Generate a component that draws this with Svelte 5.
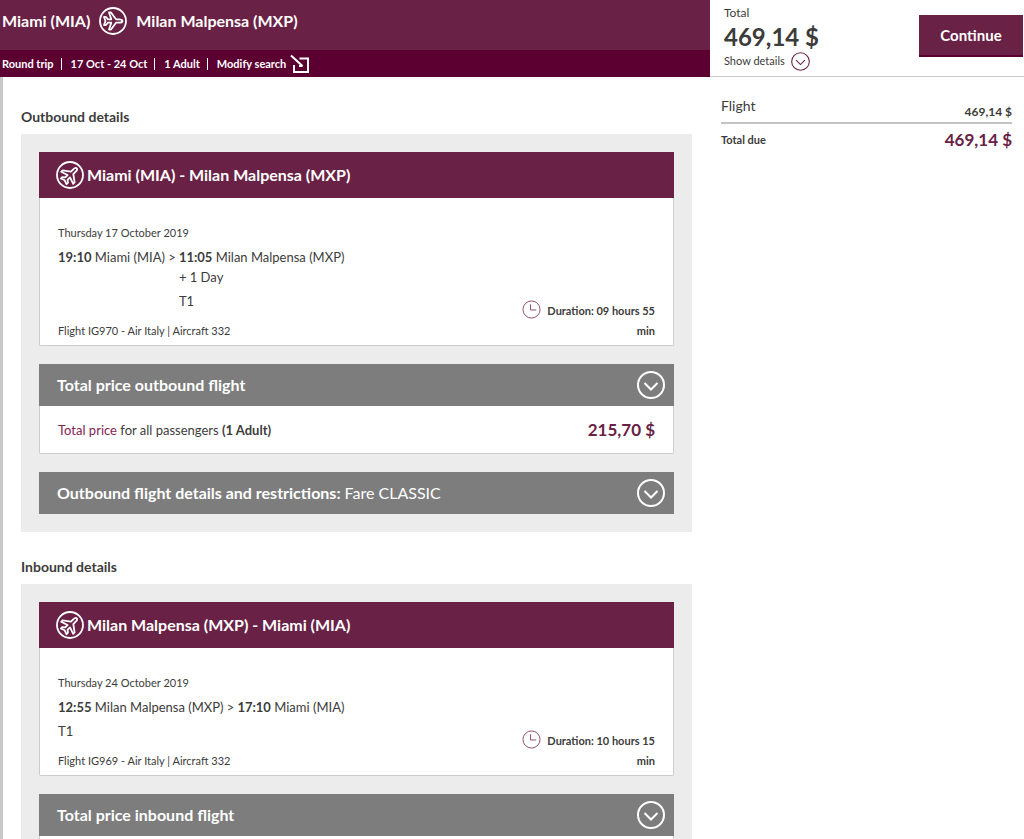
<script>
  const flights = [
    {
      id: 'outbound',
      heading: 'Outbound details',
      title: 'Miami (MIA) - Milan Malpensa (MXP)',
      date: 'Thursday 17 October 2019',
      from: { time: '19:10', place: 'Miami (MIA)', notes: [], terminal: '' },
      to: { time: '11:05', place: 'Milan Malpensa (MXP)', notes: ['+ 1 Day'], terminal: 'T1' },
      carrier: 'Flight IG970 - Air Italy | Aircraft 332',
      duration: '09 hours 55 min',
      priceTitle: 'Total price outbound flight',
      price: '215,70 $',
      restrictions: 'Outbound flight details and restrictions:'
    },
    {
      id: 'inbound',
      heading: 'Inbound details',
      title: 'Milan Malpensa (MXP) - Miami (MIA)',
      date: 'Thursday 24 October 2019',
      from: { time: '12:55', place: 'Milan Malpensa (MXP)', notes: [], terminal: 'T1' },
      to: { time: '17:10', place: 'Miami (MIA)', notes: [], terminal: '' },
      carrier: 'Flight IG969 - Air Italy | Aircraft 332',
      duration: '10 hours 15 min',
      priceTitle: 'Total price inbound flight',
      price: '',
      restrictions: ''
    }
  ];
</script>

{#snippet plane(angle)}
  <svg class="plane" viewBox="0 0 28 28" aria-hidden="true">
    <circle cx="14" cy="14" r="13" />
    <path
      transform="rotate({angle} 14 14)"
      d="M23.5 14C23.5 13 22 12.300 20 12.300H17L12 5.500H10L12.300 12.300H9L7 10H5L6.500 14L5 18H7L9 15.700H12.300L10 22.500H12L17 15.700H20C22 15.700 23.500 15 23.500 14Z"
    />
  </svg>
{/snippet}

{#snippet chevron()}
  <svg class="chevron" viewBox="0 0 28 28" aria-hidden="true">
    <circle cx="14" cy="14" r="13" />
    <path d="M7.500 12L14 18.500L20.500 12" />
  </svg>
{/snippet}

{#snippet stop(s, arrow)}
  <div class="stop">
    <div><b>{s.time}</b> {s.place}{#if arrow}{' >'}{/if}</div>
    {#each s.notes as note}<div>{note}</div>{/each}
    {#if s.terminal}<div class="terminal">{s.terminal}</div>{/if}
  </div>
{/snippet}

<div class="page">
  <header>
    <div class="banner">
      <h1>Miami (MIA) {@render plane(0)} Milan Malpensa (MXP)</h1>
      <div class="trip">
        <span>Round trip</span>
        <span>17 Oct - 24 Oct</span>
        <span>1 Adult</span>
        <a href="#search">
          Modify search
          <svg viewBox="0 0 20 20" aria-hidden="true">
            <path d="M9.500 4.500H18V18H4V11M1 1.500L12.500 12M12.500 12H9" />
          </svg>
        </a>
      </div>
    </div>
    <div class="total">
      <div class="sum">
        <span>Total</span>
        <strong>469,14 $</strong>
        <button class="show">Show details {@render chevron()}</button>
      </div>
      <button class="continue">Continue</button>
    </div>
  </header>

  <div class="content">
    <main>
      {#each flights as f (f.id)}
        <section>
          <h2>{f.heading}</h2>
          <div class="panel">
            <article>
              <h3 class="route">{@render plane(-45)}{f.title}</h3>
              <div class="box flight">
                <div class="info">
                  <div class="small">{f.date}</div>
                  <div class="stops">
                    {@render stop(f.from, true)}
                    {@render stop(f.to, false)}
                  </div>
                  <div class="small carrier">{f.carrier}</div>
                </div>
                <div class="duration">
                  <svg viewBox="0 0 20 20" aria-hidden="true">
                    <circle cx="10" cy="10" r="9" />
                    <path d="M9 4.500V10.500H15" />
                  </svg>
                  Duration: {f.duration}
                </div>
              </div>
            </article>
            <article>
              <button class="bar"><b>{f.priceTitle}</b>{@render chevron()}</button>
              <div class="box price">
                {#if f.price}
                  <span><em>Total price</em> for all passengers <b>(1 Adult)</b></span>
                  <strong>{f.price}</strong>
                {/if}
              </div>
            </article>
            {#if f.restrictions}
              <article>
                <button class="bar"><span><b>{f.restrictions}</b> Fare CLASSIC</span>{@render chevron()}</button>
              </article>
            {/if}
          </div>
        </section>
      {/each}
    </main>

    <aside>
      <dl>
        <div class="line">
          <dt>Flight</dt>
          <dd>469,14 $</dd>
        </div>
        <div class="line due">
          <dt>Total due</dt>
          <dd>469,14 $</dd>
        </div>
      </dl>
    </aside>
  </div>
</div>

<style>
  :global(body) {
    margin: 0;
    background: #fff;
  }
  .page {
    height: 100vh;
    overflow: hidden;
    display: flex;
    flex-direction: column;
    font-family: Lato, 'Open Sans', sans-serif;
    font-size: 14px;
    line-height: 20px;
    color: #3c3c3b;
  }
  button {
    font-family: inherit;
    color: inherit;
    border: 0;
    margin: 0;
    padding: 0;
    background: none;
    cursor: pointer;
  }
  h1, h2, h3, dl, dd {
    margin: 0;
  }
  svg {
    fill: none;
    stroke: currentColor;
    flex: none;
  }
  header, .content {
    display: grid;
    grid-template-columns: minmax(0, 1fr) 314px;
  }
  header {
    flex: none;
  }
  .content {
    flex: 1;
    min-height: 0;
  }
  .banner {
    color: #fff;
    background: #5c0032;
  }
  h1 {
    display: flex;
    align-items: center;
    gap: 9px;
    height: 42px;
    padding: 0 2px 8px;
    background: #692145;
    font-size: 16px;
    font-weight: 700;
  }
  .plane {
    width: 28px;
    height: 28px;
    stroke-width: 1.8;
    stroke-linejoin: round;
  }
  .trip {
    display: flex;
    align-items: center;
    height: 27px;
    padding-left: 2px;
    font-size: 11px;
    font-weight: 700;
    line-height: 12px;
  }
  .trip span {
    padding-right: 7px;
    margin-right: 9px;
    border-right: 1px solid #fff;
  }
  .trip a {
    display: flex;
    align-items: center;
    gap: 4px;
    color: inherit;
    text-decoration: none;
  }
  .trip svg {
    width: 20px;
    height: 20px;
    stroke-width: 2;
  }
  .total {
    display: flex;
    justify-content: space-between;
    align-items: flex-start;
    padding: 3px 1px 1px 14px;
    border-bottom: 1px solid #ccc;
  }
  .sum {
    display: flex;
    flex-direction: column;
    align-items: flex-start;
    font-size: 12px;
  }
  .sum strong {
    font-size: 24px;
    line-height: 28px;
  }
  .show {
    display: flex;
    align-items: center;
    gap: 6px;
    font-size: 11px;
    line-height: 20px;
  }
  .show .chevron {
    width: 19px;
    height: 19px;
    color: #692145;
    stroke-width: 1.6;
  }
  .continue {
    width: 104px;
    height: 42px;
    margin-top: 12px;
    background: #692145;
    border-bottom: 2px solid #5c0032;
    color: #fff;
    font-size: 15px;
    font-weight: 700;
  }
  main {
    overflow: hidden;
    border-left: 3px solid #c8c8c8;
    padding: 30px 18px 0;
  }
  section {
    margin-bottom: 25px;
  }
  h2 {
    font-size: 14px;
    font-weight: 700;
    line-height: 20px;
    padding-bottom: 7px;
  }
  .panel {
    display: flex;
    flex-direction: column;
    gap: 18px;
    padding: 18px;
    background: #ececec;
  }
  .route {
    display: flex;
    align-items: center;
    gap: 3px;
    height: 46px;
    padding: 0 17px;
    background: #692145;
    color: #fff;
    font-size: 16px;
    font-weight: 700;
  }
  .box {
    background: #fff;
    border: 1px solid #ccc;
    border-top: 0;
    border-radius: 0 0 2px 2px;
  }
  .flight {
    display: flex;
    justify-content: space-between;
    align-items: flex-end;
    padding: 25px 18px 4px;
  }
  .small {
    font-size: 11px;
  }
  .stops {
    display: flex;
    gap: 3px;
    margin: 4px 0 10px;
    font-size: 13px;
  }
  .terminal {
    margin-top: 4px;
  }
  .duration {
    width: 138px;
    text-align: right;
    font-size: 11px;
    font-weight: 700;
  }
  .duration svg {
    width: 19px;
    height: 19px;
    margin: -6px 4px 0 0;
    vertical-align: middle;
    color: #8a4468;
  }
  .bar {
    display: flex;
    align-items: center;
    justify-content: space-between;
    width: 100%;
    height: 42px;
    padding: 0 9px 0 18px;
    background: #7d7d7d;
    color: #fff;
    font-size: 16px;
    line-height: 20px;
    text-align: left;
  }
  .bar .chevron {
    width: 28px;
    height: 28px;
    stroke-width: 2;
  }
  .price {
    display: flex;
    align-items: center;
    justify-content: space-between;
    min-height: 47px;
    padding: 0 18px;
    font-size: 13px;
  }
  em {
    font-style: normal;
    color: #7f2453;
  }
  .price strong {
    font-size: 17px;
    color: #692145;
  }
  aside {
    padding: 19px 12px 0 11px;
  }
  .line {
    display: flex;
    justify-content: space-between;
    align-items: flex-end;
  }
  .line:first-child {
    border-bottom: 2px solid #c4c4c4;
    height: 26px;
    align-items: flex-start;
  }
  dd {
    font-weight: 700;
    font-size: 12px;
  }
  .line:first-child dd {
    padding-top: 6px;
  }
  .due {
    align-items: center;
    padding-top: 6px;
  }
  .due dt {
    font-size: 11px;
    font-weight: 700;
  }
  .due dd {
    font-size: 17px;
    color: #692145;
  }
</style>
